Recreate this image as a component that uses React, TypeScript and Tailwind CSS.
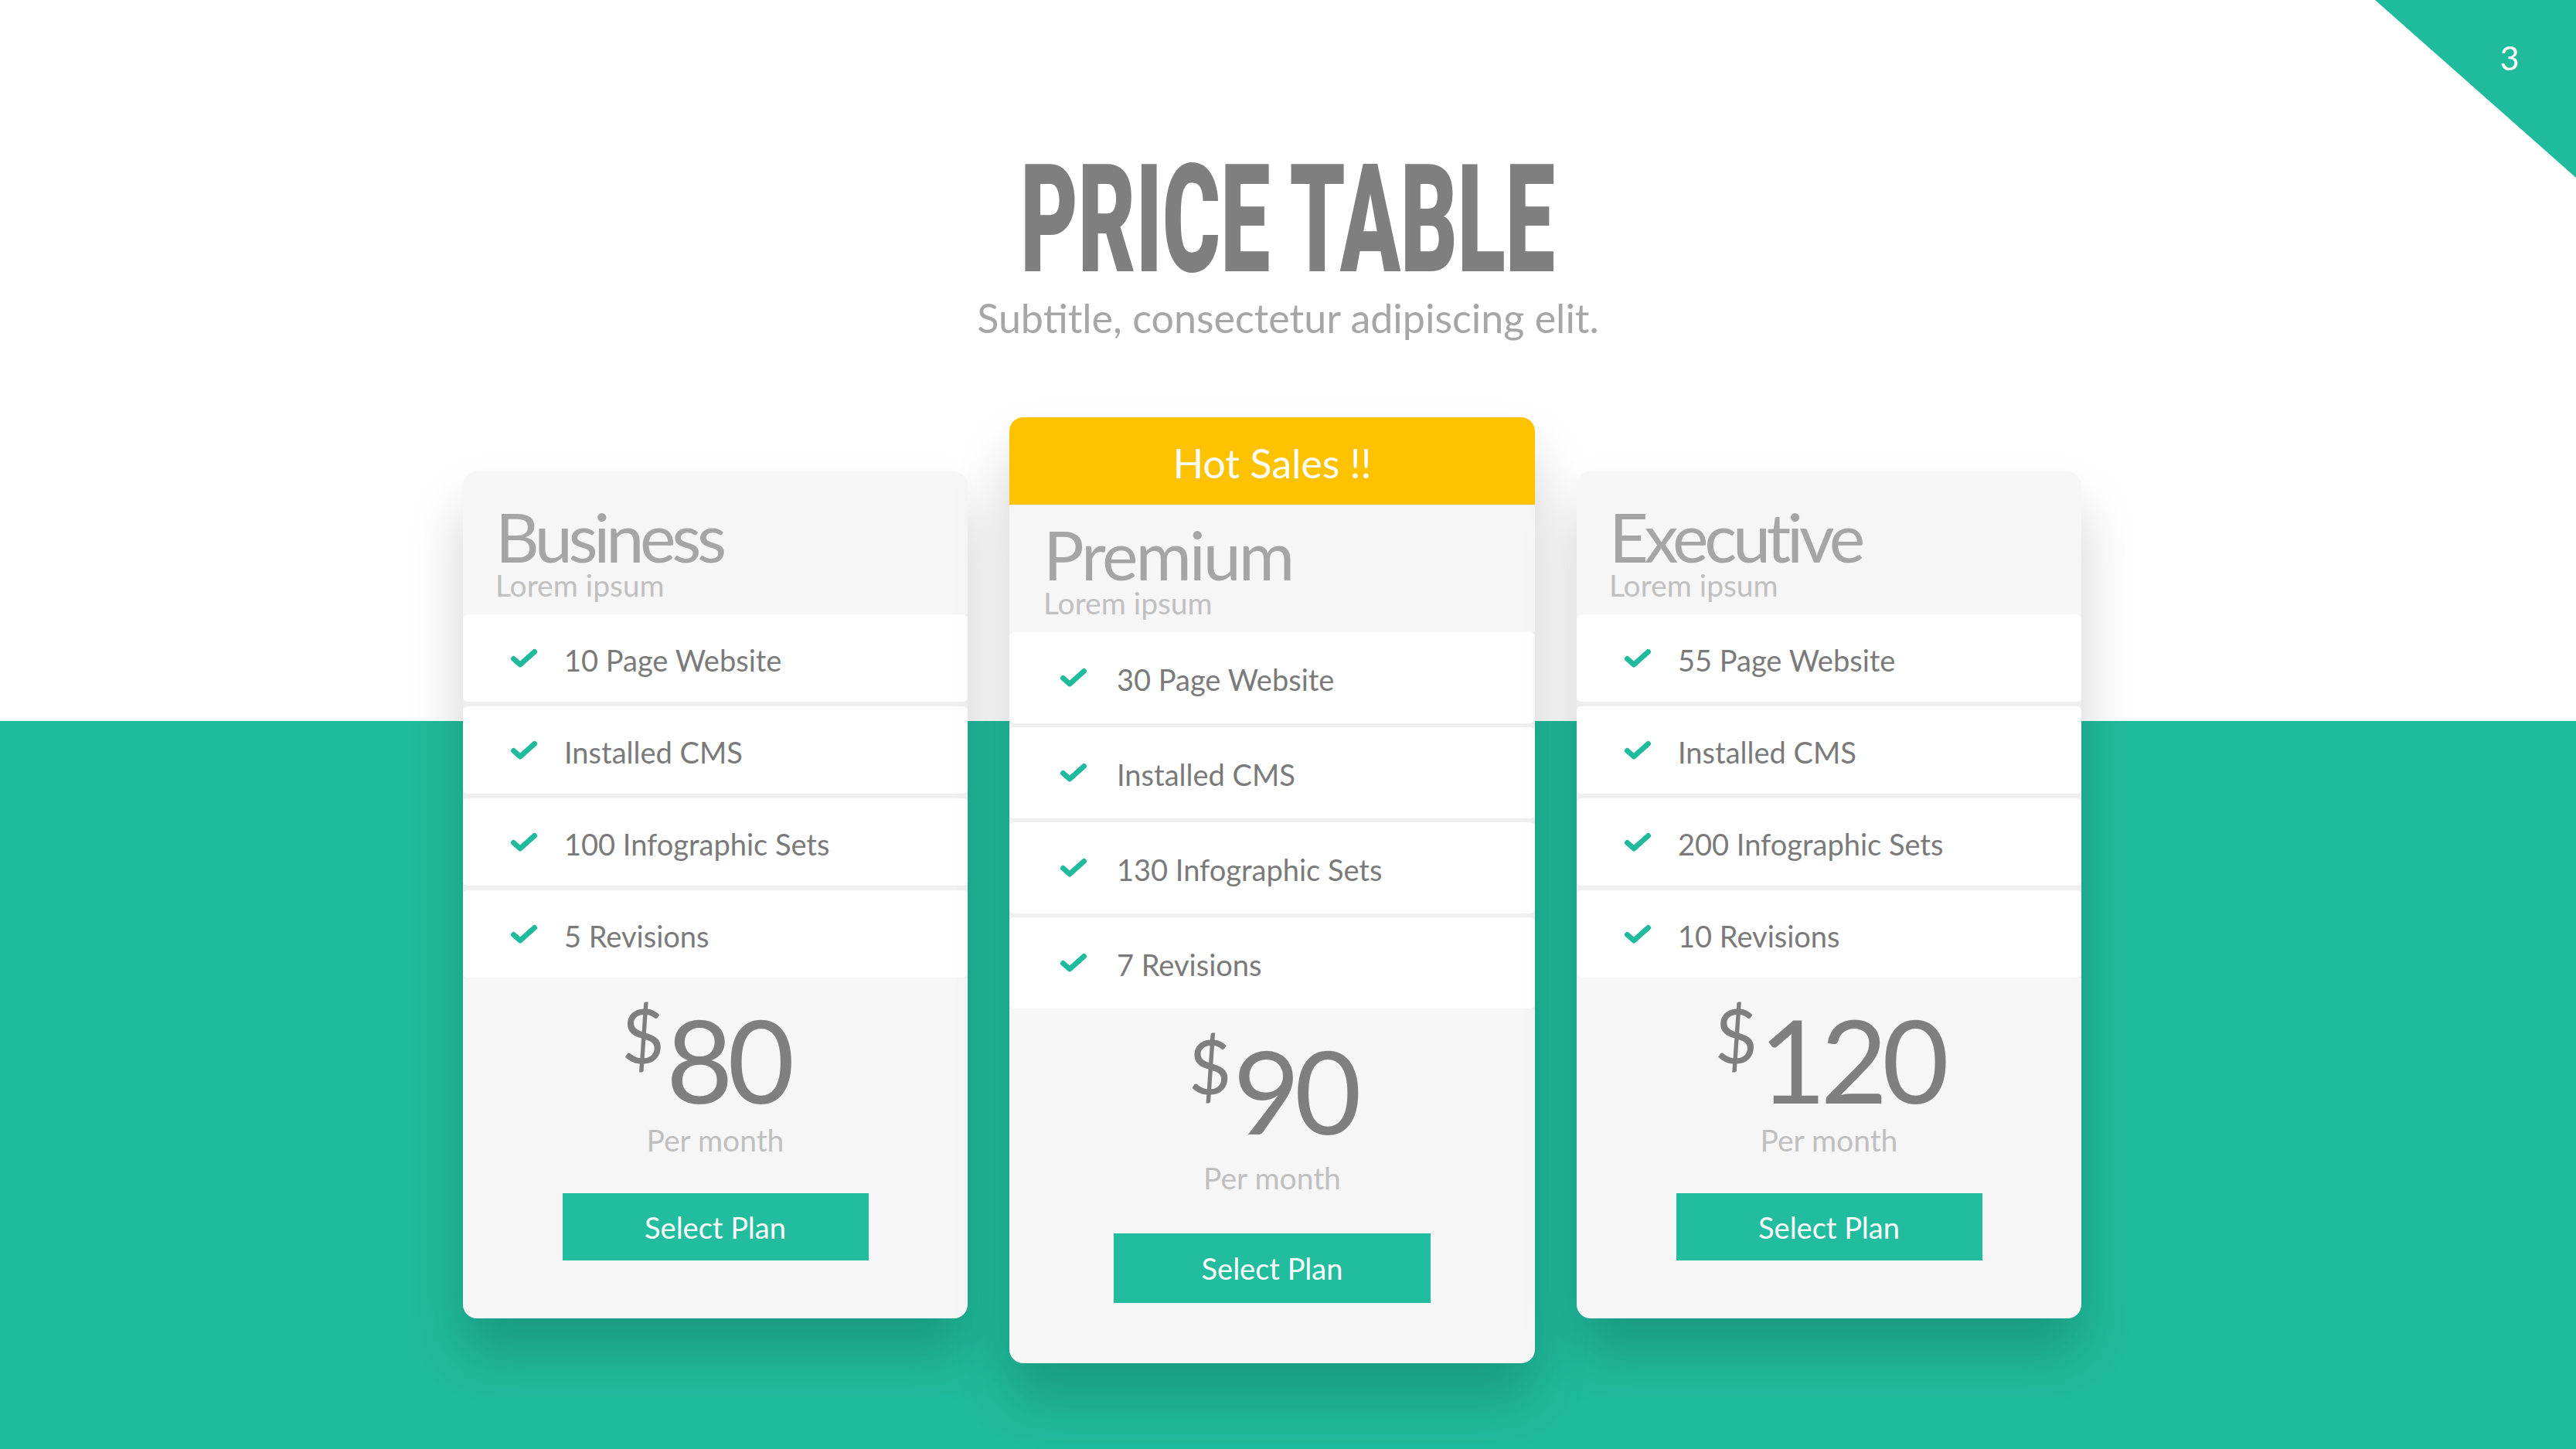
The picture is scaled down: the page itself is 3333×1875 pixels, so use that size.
import React from "react";

type Plan = {
  name: string;
  features: string[];
  price: string;
  hot?: boolean;
};

const plans: Plan[] = [
  {
    name: "Business",
    features: ["10 Page Website", "Installed CMS", "100 Infographic Sets", "5 Revisions"],
    price: "80",
  },
  {
    name: "Premium",
    features: ["30 Page Website", "Installed CMS", "130 Infographic Sets", "7 Revisions"],
    price: "90",
    hot: true,
  },
  {
    name: "Executive",
    features: ["55 Page Website", "Installed CMS", "200 Infographic Sets", "10 Revisions"],
    price: "120",
  },
];

function Check() {
  return (
    <svg width="36" height="28" viewBox="0 0 36 28" className="shrink-0">
      <path
        d="M4.5 14.5 L13 22 L31.5 5.5"
        fill="none"
        stroke="#20bb9c"
        strokeWidth="7"
        strokeLinecap="round"
        strokeLinejoin="round"
      />
    </svg>
  );
}

function Card({ plan }: { plan: Plan }) {
  const hot = !!plan.hot;
  const biz = plan.name === "Business";
  return (
    <div
      className={
        hot
          ? "w-[680px] rounded-[18px] overflow-hidden bg-[#f6f6f6] shadow-[0_45px_70px_rgba(0,0,0,0.18)] flex flex-col"
          : "w-[653px] mt-[70px] rounded-[18px] overflow-hidden bg-[#f6f6f6] shadow-[0_45px_70px_rgba(0,0,0,0.18)] flex flex-col"
      }
    >
      {hot && (
        <div className="h-[113px] pt-[4px] bg-[#fec200] flex items-center justify-center text-white text-[52px] leading-none">
          Hot Sales !!
        </div>
      )}
      <div className={hot ? "pt-[20px] pb-[18px] pl-[44px] flex flex-col" : "pt-[40px] pb-[18px] pl-[42px] flex flex-col"}>
        <div
          className={
            hot
              ? "text-[88px] leading-none tracking-[-0.035em] text-[#a5a5a5]"
              : "text-[88px] leading-none tracking-[-0.06em] text-[#a5a5a5]"
          }
        >
          {plan.name}
        </div>
        <div className="text-[39px] leading-none text-[#c0c0c0]">Lorem ipsum</div>
      </div>
      <div className={hot ? "flex flex-col gap-[5px] bg-[#efefef]" : "flex flex-col gap-[6px] bg-[#efefef]"}>
        {plan.features.map((f) => (
          <div
            key={f}
            className={
              hot
                ? "h-[118px] bg-white rounded-[6px] flex items-center pl-[65px] gap-[38px]"
                : "h-[113px] bg-white rounded-[6px] flex items-center pl-[61px] gap-[34px]"
            }
          >
            <Check />
            <span className="text-[38px] leading-none text-[#7a7a7a] pt-[4px]">{f}</span>
          </div>
        ))}
      </div>
      <div className={hot ? "flex flex-col items-center pt-[30px] pb-[78px]" : "flex flex-col items-center pt-[30px] pb-[75px]"}>
        <div className={biz ? "flex items-start justify-center text-[#7f7f7f] mr-[26px]" : "flex items-start justify-center text-[#7f7f7f]"}>
          <span className="text-[96px] leading-none mt-[-4px] mr-[2px]">$</span>
          <span className="text-[150px] leading-none tracking-[-0.05em]">{plan.price}</span>
        </div>
        <div className={hot ? "mt-[20px] text-[39px] leading-none text-[#bfbfbf]" : "mt-[11px] text-[39px] leading-none text-[#bfbfbf]"}>
          Per month
        </div>
        <div
          className={
            hot
              ? "mt-[52px] w-[410px] h-[90px] bg-[#21bd9e] flex items-center justify-center text-white text-[38px] leading-none"
              : "mt-[49px] w-[396px] h-[87px] bg-[#21bd9e] flex items-center justify-center text-white text-[38px] leading-none"
          }
        >
          Select Plan
        </div>
      </div>
    </div>
  );
}

export default function App() {
  return (
    <div className="relative w-[3333px] h-[1875px] overflow-hidden bg-[linear-gradient(to_bottom,#ffffff_933px,#20bb9c_933px)] font-['Lato','Open_Sans',sans-serif]">
      <svg className="absolute top-0 right-0" width="260" height="230" viewBox="0 0 260 230">
        <polygon points="0,0 260,0 260,230" fill="#20bb9c" />
      </svg>
      <div className="absolute top-[53px] left-[3230px] w-[34px] text-center text-white text-[43px] leading-none">3</div>

      <div className="flex flex-col items-center pt-[188px]">
        <div className="h-[194px] flex justify-center">
          <span className="inline-block origin-center scale-x-[0.59] font-['Roboto',sans-serif] font-black text-[194px] leading-none text-[#7f7f7f]">
            PRICE TABLE
          </span>
        </div>
        <div className="mt-[3px] text-[52px] leading-none text-[#a6a6a6]">Subtitle, consectetur adipiscing elit.</div>
        <div className="self-stretch flex items-start pl-[599px] gap-[54px] mt-[103px]">
          {plans.map((p) => (
            <Card key={p.name} plan={p} />
          ))}
        </div>
      </div>
    </div>
  );
}
